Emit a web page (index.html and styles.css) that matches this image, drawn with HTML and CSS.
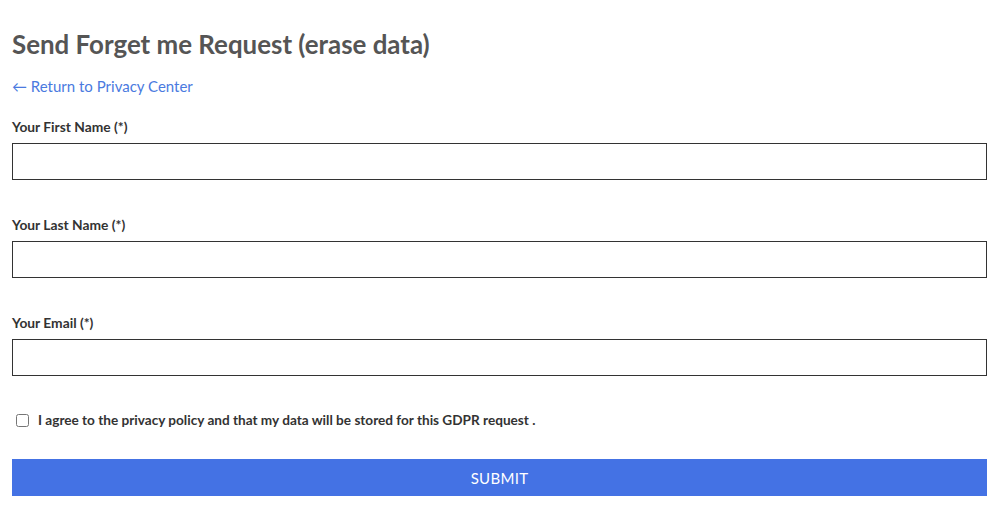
FILE: index.html
```html
<!DOCTYPE html>
<html lang="en">
<head>
<meta charset="utf-8">
<title>Send Forget me Request</title>
<link rel="stylesheet" href="styles.css">
</head>
<body>
<main class="page">
  <h1 class="title">Send Forget me Request (erase data)</h1>
  <a class="back" href="#">&larr; Return to Privacy Center</a>
  <form class="form">
    <div class="field">
      <label class="label" for="fn">Your First Name (*)</label>
      <input class="input" id="fn" type="text">
    </div>
    <div class="field">
      <label class="label" for="ln">Your Last Name (*)</label>
      <input class="input" id="ln" type="text">
    </div>
    <div class="field">
      <label class="label" for="em">Your Email (*)</label>
      <input class="input" id="em" type="email">
    </div>
    <label class="agree">
      <input class="check" type="checkbox">
      <span>I agree to the privacy policy and that my data will be stored for this GDPR request .</span>
    </label>
    <button class="submit" type="button">SUBMIT</button>
  </form>
</main>
</body>
</html>
```
FILE: styles.css
```css
html, body {
  margin: 0;
  padding: 0;
  background: #fff;
}
body {
  font-family: Lato, "Open Sans", sans-serif;
  color: #333;
}
.page {
  padding: 28px 13px 0 12px;
  display: flex;
  flex-direction: column;
}
.title {
  margin: 0;
  font-size: 25.9px;
  line-height: 32px;
  font-weight: 700;
  color: #555;
}
.back {
  margin-top: 16px;
  font-size: 15px;
  line-height: 20px;
  color: #4a7ae0;
  text-decoration: none;
  align-self: flex-start;
}
.form {
  margin-top: 22px;
  display: flex;
  flex-direction: column;
}
.field {
  display: flex;
  flex-direction: column;
  margin-bottom: 36px;
}
.label {
  font-size: 13.8px;
  line-height: 18px;
  font-weight: 700;
  color: #333;
  margin-bottom: 7px;
}
.input {
  box-sizing: border-box;
  height: 37px;
  width: 100%;
  margin: 0;
  border: 1px solid #333;
  border-radius: 0;
  background: #fff;
}
.agree {
  display: flex;
  align-items: center;
  gap: 9px;
  padding-left: 4px;
  font-size: 13.6px;
  line-height: 16px;
  font-weight: 700;
  color: #333;
}
.check {
  width: 13px;
  height: 13px;
  margin: 0;
}
.submit {
  margin-top: 31px;
  height: 37px;
  border: 0;
  background: #4472e4;
  color: #fff;
  font-family: Lato, sans-serif;
  font-size: 15px;
  letter-spacing: 0.3px;
}
```
